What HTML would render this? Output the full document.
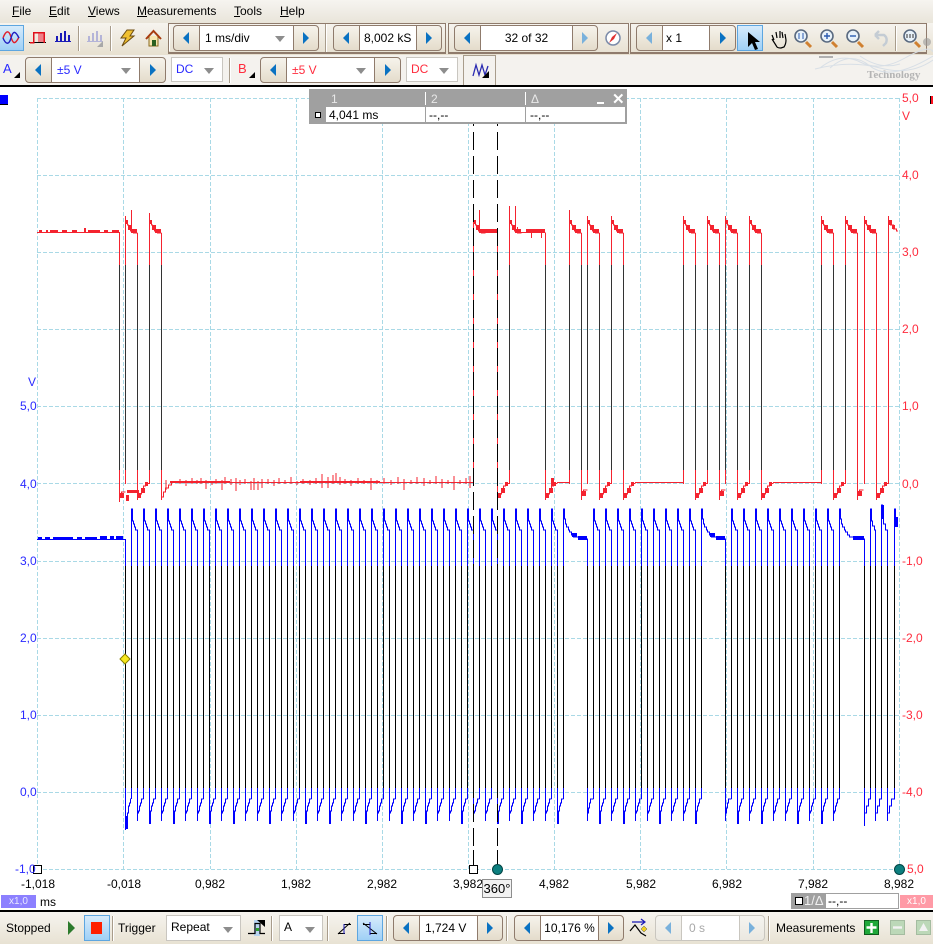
<!DOCTYPE html>
<html><head><meta charset="utf-8"><title>Scope</title>
<style>
html,body{margin:0;padding:0;width:933px;height:944px;overflow:hidden;background:#fff;font:12px "Liberation Sans",sans-serif;color:#000}
.a{position:absolute;white-space:nowrap;line-height:14px}
.band{position:absolute;left:0;width:933px}
.s{position:absolute;height:24px;border:1px solid #8f7b6c;border-radius:4px;background:linear-gradient(#f6f3ec,#e4dccb);box-sizing:content-box}
.s b{position:absolute;top:0;height:24px;background:#fff;border-left:1px solid #8f7b6c;border-right:1px solid #8f7b6c;font-weight:normal;line-height:24px;white-space:nowrap;box-sizing:border-box}
.s.off{border-color:#c9c6bf;background:linear-gradient(#f5f4f0,#ebe8e0)}
.s.off b{border-color:#c9c6bf}
.al,.ar{position:absolute;top:6px;width:0;height:0;border-top:6px solid transparent;border-bottom:6px solid transparent}
.al{left:9px;border-right:6px solid #0a72c2}
.ar{right:9px;border-left:6px solid #0a72c2}
.lt.al{border-right-color:#79b1dc}.lt.ar{border-left-color:#79b1dc}
.dd{position:absolute;width:0;height:0;border-left:5px solid transparent;border-right:5px solid transparent;border-top:6px solid #8d8d8d}
.box{position:absolute;background:#fff;border:1px solid #c9c6c0;box-sizing:border-box;line-height:23px;white-space:nowrap}
.sep{position:absolute;width:1px;background:#a89c8b;border-right:1px solid #fff}
.fr{position:absolute;border:1px solid #8f7b6c;box-sizing:border-box}
.sel{position:absolute;background:linear-gradient(#d6ebfb,#9fd0f6);border:1px solid #5da6e0;box-sizing:border-box}
.bl{color:#2a2aff}.rd{color:#ff2b3d}
u{text-decoration:underline}
</style></head><body>

<div class="band" style="top:0;height:23px;background:linear-gradient(#f6f4f0,#e9e5da)"></div>
<div class="band" style="top:23px;height:32px;background:linear-gradient(#f6f4ef,#e7e0d0)"></div>
<div class="band" style="top:55px;height:30px;background:#f4f2ee"></div>
<div class="band" style="top:85px;height:2px;background:#000"></div>
<div class="band" style="top:910px;height:2px;background:#000"></div>
<div class="band" style="top:912px;height:32px;background:linear-gradient(#f6f4ef,#e8e2d3)"></div>

<!-- Menu -->
<span class="a" style="left:12px;top:4px"><u>F</u>ile</span>
<span class="a" style="left:49px;top:4px"><u>E</u>dit</span>
<span class="a" style="left:88px;top:4px"><u>V</u>iews</span>
<span class="a" style="left:137px;top:4px"><u>M</u>easurements</span>
<span class="a" style="left:234px;top:4px"><u>T</u>ools</span>
<span class="a" style="left:280px;top:4px"><u>H</u>elp</span>

<!-- Row 1 -->
<div class="sel" style="left:-1px;top:25px;width:25px;height:26px"></div>
<div class="sep" style="left:78px;top:26px;height:25px"></div>
<div class="sep" style="left:110px;top:26px;height:25px"></div>
<div class="sep" style="left:168px;top:26px;height:25px"></div>
<div class="fr" style="left:168px;top:23px;width:278px;height:31px;border-bottom-width:2px"></div>
<div class="sep" style="left:325px;top:24px;height:28px"></div>
<div class="fr" style="left:448px;top:23px;width:181px;height:31px;border-bottom-width:2px"></div>
<div class="fr" style="left:630px;top:23px;width:297px;height:31px;border-bottom-width:2px"></div>
<div class="sep" style="left:895px;top:26px;height:25px"></div>

<div class="s" style="left:173px;top:25px;width:144px"><i class="al"></i><b style="left:25px;width:95px;padding-left:5px">1 ms/div</b><u class="dd" style="left:101px;top:10px"></u><i class="ar"></i></div>
<div class="s" style="left:333px;top:25px;width:107px"><i class="al"></i><b style="left:25px;width:58px;padding-left:4px">8,002 kS</b><i class="ar"></i></div>
<div class="s" style="left:454px;top:25px;width:142px;border-color:#8f7b6c"><i class="al"></i><b style="left:25px;width:93px;text-align:center">32 of 32</b><i class="ar lt"></i></div>
<div class="s" style="left:636px;top:25px;width:98px"><i class="al lt"></i><b style="left:25px;width:48px;padding-left:3px">x 1</b><i class="ar"></i></div>
<div class="sel" style="left:737px;top:25px;width:26px;height:26px"></div>

<!-- Row 2 -->
<span class="a bl" style="left:3px;top:62px;font-size:13px">A</span>
<div class="s" style="left:25px;top:57px;width:139px"><i class="al"></i><b class="bl" style="left:25px;width:89px;padding-left:5px">±5 V</b><u class="dd" style="left:95px;top:10px"></u><i class="ar"></i></div>
<div class="box bl" style="left:171px;top:57px;width:52px;height:25px;padding-left:4px">DC<u class="dd" style="left:32px;top:10px"></u></div>
<div class="sep" style="left:229px;top:58px;height:25px"></div>
<span class="a rd" style="left:238px;top:62px;font-size:13px">B</span>
<div class="s" style="left:260px;top:57px;width:139px"><i class="al"></i><b class="rd" style="left:25px;width:89px;padding-left:5px">±5 V</b><u class="dd" style="left:95px;top:10px"></u><i class="ar"></i></div>
<div class="box rd" style="left:406px;top:57px;width:52px;height:25px;padding-left:4px">DC<u class="dd" style="left:32px;top:10px"></u></div>
<div class="fr" style="left:463px;top:55px;width:33px;height:30px;border-bottom:0;border-color:#a89c8b"></div>
<span class="a" style="left:867px;top:69px;font:bold 11px 'Liberation Serif',serif;color:#b4b4b4">Technology</span>

<!-- Bottom toolbar -->
<span class="a" style="left:6px;top:921px">Stopped</span>
<div class="sel" style="left:84px;top:915px;width:26px;height:26px"></div>
<div class="sep" style="left:112px;top:916px;height:25px"></div>
<span class="a" style="left:118px;top:921px">Trigger</span>
<div class="box" style="left:166px;top:915px;width:75px;height:26px;padding-left:4px">Repeat<u class="dd" style="left:56px;top:11px"></u></div>
<div class="sep" style="left:271px;top:916px;height:25px"></div>
<div class="box" style="left:279px;top:915px;width:44px;height:26px;padding-left:4px">A<u class="dd" style="left:25px;top:11px"></u></div>
<div class="sep" style="left:327px;top:916px;height:25px"></div>
<div class="sel" style="left:357px;top:915px;width:26px;height:26px"></div>
<div class="sep" style="left:386px;top:916px;height:25px"></div>
<div class="s" style="left:393px;top:915px;width:108px"><i class="al"></i><b style="left:25px;width:59px;padding-left:5px">1,724 V</b><i class="ar"></i></div>
<div class="sep" style="left:506px;top:916px;height:25px"></div>
<div class="s" style="left:514px;top:915px;width:108px"><i class="al"></i><b style="left:25px;width:59px;text-align:center">10,176 %</b><i class="ar"></i></div>
<div class="s off" style="left:655px;top:915px;width:108px"><i class="al lt"></i><b style="left:25px;width:59px;padding-left:7px;color:#a8a8a8">0 s</b><i class="ar lt"></i></div>
<div class="sep" style="left:768px;top:916px;height:25px"></div>
<span class="a" style="left:776px;top:921px">Measurements</span>

<!-- Plot -->
<svg style="position:absolute;left:0;top:0" width="933" height="944" viewBox="0 0 933 944" shape-rendering="crispEdges">
<defs>
<g id="p"><path fill="none" stroke="#0000ff" d="M.5 799V509H1.5V521H2.5V524H3.5V527H4.5V530H6.5V821V813H7.5V811H8.5V806H9.5V803H10.5V799H12.5"/><path stroke="#000" d="M.5 566V788M6.5 566V788"/></g>
<g id="q"><path fill="none" stroke="#0000ff" d="M.5 799V509H1.5V521H2.5V524H3.5V527H4.5V530H6.5V824V813H7.5V824V811H8.5V806H9.5V803H10.5V799H12.5"/><path stroke="#000" d="M.5 566V788M6.5 566V788"/></g>
<g id="l"><path fill="none" stroke="#0000ff" d="M.5 799V509H1.5V519H2.5V524H3.5V527H5.5V530H6.5V532H8.5V535H10.5V537H15.5V539H24.5V821V813H25.5V808H26.5V803H27.5V799H30.5"/><rect x="9" y="533" width="5" height="4" fill="#0000ff"/><rect x="15" y="536" width="9" height="4" fill="#0000ff"/><path stroke="#000" d="M.5 566V788M24.5 566V788"/></g>
<g id="h"><path fill="none" stroke="#f4232f" d="M.5 484V216V221H2.5V225H3.5V228H5.5V231H8.5V233H12.5"/><rect x="1" y="220" width="2" height="4" fill="#f4232f"/><rect x="3" y="225" width="4" height="5" fill="#f4232f"/><rect x="6" y="229" width="6" height="4" fill="#f4232f"/></g>
<g id="d"><path fill="none" stroke="#f4232f" d="M.5 500V497H2.5V494H4.5V490H6.5V486H8.5V483.5H12.5"/><rect x="1" y="493" width="3" height="5" fill="#f4232f"/><rect x="4" y="488" width="4" height="5" fill="#f4232f"/><rect x="8" y="482" width="3" height="4" fill="#f4232f"/></g>
<g id="e"><path fill="none" stroke="#f4232f" d="M.5 500V494H2.5V490H6.5"/><rect x="1" y="491" width="4" height="5" fill="#f4232f"/></g>
</defs>

<path fill="none" stroke="#a9d9e6" stroke-dasharray="4 2" d="M37.5 98V869M123.5 98V869M210.5 98V869M296.5 98V869M382.5 98V869M468.5 98V869M554.5 98V869M640.5 98V869M726.5 98V869M813.5 98V869M899.5 98V869M37 98.5H899M37 175.5H899M37 252.5H899M37 329.5H899M37 406.5H899M37 483.5H899M37 561.5H899M37 638.5H899M37 715.5H899M37 792.5H899M37 869.5H899"/>

<!-- Red trace -->
<path fill="none" stroke="#f4232f" d="M37 232.5H119.5V502M137.5 233V500M161.5 233V500M497.5 233V500M545.5 233V500M581.5 233V500M599.5 233V500M623.5 233V500M695.5 233V500M719.5 233V500M737.5 233V500M761.5 233V500M833.5 233V500M857.5 233V500M876.5 233V500"/>
<path fill="#f4232f" d="M39 230h3v2h-3zM46 230h2v2h-2zM50 230h8v2h-8zM62 230h5v2h-5zM72 230h5v2h-5zM84 228h2v4h-2zM88 230h12v2h-12zM104 230h4v2h-4zM112 230h7v2h-7z"/>
<use href="#e" x="119" y="2"/>
<use href="#h" x="125"/><use href="#d" x="137"/><use href="#h" x="149"/>
<path stroke="#f4232f" d="M131.5 210V226"/>
<use href="#h" x="473"/><path fill="none" stroke="#f4232f" d="M485 232.5H497.5"/><rect x="481" y="229" width="16" height="4" fill="#f4232f"/><path stroke="#f4232f" d="M479.5 210V226"/>
<use href="#d" x="497"/>
<use href="#h" x="509"/><path fill="none" stroke="#f4232f" d="M521 232.5H545.5"/><rect x="526" y="229" width="19" height="4" fill="#f4232f"/><path stroke="#f4232f" d="M515.5 206V228M517.5 227V233M531.5 230V238M541.5 230V238"/>
<use href="#d" x="545"/><path fill="none" stroke="#f4232f" d="M557 482.5H569"/>
<use href="#h" x="569"/><use href="#e" x="581"/><use href="#h" x="587"/><use href="#d" x="599"/><use href="#h" x="611"/><use href="#d" x="623"/>
<path fill="none" stroke="#f4232f" d="M635 482.5H683"/>
<use href="#h" x="683"/><use href="#d" x="695"/><use href="#h" x="707"/><use href="#e" x="719"/><use href="#h" x="725"/><use href="#d" x="737"/><use href="#h" x="749"/><use href="#d" x="761"/>
<path fill="none" stroke="#f4232f" d="M773 482.5H821"/>
<use href="#h" x="821"/><use href="#d" x="833"/><use href="#h" x="845"/><use href="#e" x="857"/><use href="#h" x="864"/><use href="#d" x="876"/><path fill="none" stroke="#f4232f" d="M888.5 484V216V221H890.5V225H893.5V229H896.5V231H898"/><rect x="889" y="220" width="3" height="5" fill="#f4232f"/><rect x="892" y="225" width="3" height="4" fill="#f4232f"/>
<path fill="none" stroke="#f4232f" d="M161.5 500V497H163.5V492H165.5V488H168.5V485H171.5V482.5H473M166 480V490M180 479V484M186 480V486M192 478V484M197 480V484M201 478V484M206 480V489M212 481V485M216 479V484M222 480V490M225 477V484M231 479V485M236 478V491M240 480V485M245 479V484M251 481V490M254 478V490M258 481V490M262 479V488M268 479V484M274 480V486M279 478V484M285 480V484M291 477V484M297 481V485M303 479V484M310 480V485M316 478V484M322 474V488M328 477V488M333 475V484M336 473V482M340 477V485M345 479V484M351 480V486M358 478V484M364 480V484M371 478V490M377 480V484M384 478V484M391 480V485M398 477V484M404 479V490M411 480V484M417 477V484M424 478V486M430 480V484M436 476V484M442 479V488M448 480V484M454 476V490M460 480V484M466 478V484M470 476V488"/>
<rect x="170" y="481" width="60" height="2" fill="#f4232f"/><rect x="300" y="481" width="80" height="2" fill="#f4232f"/>
<path fill="#f4232f" d="M127 490h12v3h-12zM126 495h3v6h-3zM551 478h3v8h-3z"/>
<path stroke="#f4232f" d="M473.5 216V484M509.5 206V484M569.5 210V484M587.5 216V484M611.5 216V484M683.5 216V484M707.5 216V484M725.5 216V484M749.5 216V484M821.5 216V484M845.5 216V484M864.5 216V484M888.5 216V484M125.5 220V484M149.5 213V484"/>
<path stroke="#333" d="M119.5 265V470M125.5 265V470M137.5 265V470M149.5 265V470M161.5 265V470M509.5 265V470M545.5 265V470M569.5 265V470M581.5 265V470M587.5 265V470M599.5 265V470M611.5 265V470M623.5 265V470M683.5 265V470M695.5 265V470M707.5 265V470M719.5 265V470M725.5 265V470M737.5 265V470M749.5 265V470M761.5 265V470M821.5 265V470M833.5 265V470M845.5 265V470"/>

<!-- Blue trace -->
<path fill="none" stroke="#0000ff" d="M37 539.5H125.5V830V818H127.5V813H128.5V806H129.5V803H130.5V799H131"/>
<path fill="#0000ff" d="M38 537h4v2h-4zM45 537h5v2h-5zM53 537h20v2h-20zM77 537h5v2h-5zM85 537h12v2h-12zM100 536h7v3h-7zM110 536h4v3h-4zM116 536h7v3h-7zM125 816h3v13h-3z"/>
<path stroke="#000" d="M125.5 566V788"/>
<use href="#p" x="131"/><use href="#q" x="143"/><use href="#p" x="155"/><use href="#q" x="167"/><use href="#p" x="179"/><use href="#p" x="191"/><use href="#q" x="203"/><use href="#p" x="215"/><use href="#q" x="227"/><use href="#p" x="239"/><use href="#p" x="251"/><use href="#q" x="263"/><use href="#p" x="275"/><use href="#p" x="287"/><use href="#q" x="299"/><use href="#p" x="311"/><use href="#q" x="323"/><use href="#p" x="335"/><use href="#p" x="347"/><use href="#q" x="359"/><use href="#p" x="371"/><use href="#p" x="383"/><use href="#q" x="395"/><use href="#p" x="407"/><use href="#q" x="419"/><use href="#p" x="431"/><use href="#p" x="443"/><use href="#q" x="455"/><use href="#p" x="467"/><use href="#p" x="479"/><use href="#q" x="491"/><use href="#p" x="503"/><use href="#q" x="515"/><use href="#p" x="527"/><use href="#p" x="539"/><use href="#q" x="551"/>
<use href="#l" x="563"/>
<use href="#q" x="593"/><use href="#p" x="605"/><use href="#q" x="617"/><use href="#p" x="629"/><use href="#p" x="641"/><use href="#q" x="653"/><use href="#p" x="665"/><use href="#p" x="677"/><use href="#q" x="689"/>
<use href="#l" x="701"/>
<use href="#q" x="731"/><use href="#p" x="743"/><use href="#q" x="755"/><use href="#p" x="767"/><use href="#p" x="779"/><use href="#q" x="791"/><use href="#p" x="803"/><use href="#q" x="815"/><use href="#p" x="827"/>
<path fill="none" stroke="#0000ff" d="M839.5 799V509H840.5V519H841.5V524H842.5V527H844.5V530H845.5V532H847.5V535H849.5V537H854.5V539H864.5V826V813H866.5V806H868.5V799H870.5V509H871.5V521H872.5V526H874.5V530H875.5V821V813H877.5V806H879.5V799H881.5V505H882.5V518H883.5V524H885.5V530H887.5V821V813H889.5V806H891.5V799H894.5V509H895.5V521H896.5V526H897.5"/>
<rect x="853" y="536" width="11" height="4" fill="#0000ff"/><rect x="881" y="505" width="3" height="14" fill="#0000ff"/><rect x="895" y="517" width="3" height="10" fill="#0000ff"/>
<path stroke="#000" d="M839.5 566V788M864.5 566V788M870.5 566V788M875.5 566V788M881.5 566V788M887.5 566V788M894.5 566V788"/>

<!-- Cursors -->
<path fill="none" stroke="#000" stroke-dasharray="18 6" d="M473.5 108V864M497.5 108V864"/>
<path stroke="#000" d="M473.5 850V865M497.5 850V865"/>
<g shape-rendering="auto">
<polygon points="125,654 130,659 125,664 120,659" fill="#f7e81c" stroke="#8a8000"/>
<circle cx="497.5" cy="869.5" r="5" fill="#0c7f7f" stroke="#044"/>
<circle cx="899.5" cy="869.5" r="5" fill="#0c7f7f" stroke="#044"/>
</g>
<rect x="33.5" y="865.5" width="8" height="8" fill="#fff" stroke="#000"/>
<rect x="469.5" y="865.5" width="8" height="8" fill="#fff" stroke="#000"/>
<rect x="0" y="95" width="8" height="9" fill="#0000ff"/><path stroke="#000" d="M0 104.5H8"/>
<rect x="930" y="96" width="3" height="8" fill="#ff1020"/><rect x="930" y="96" width="1" height="8" fill="#000"/>
</svg>

<!-- Y labels -->
<span class="a bl" style="left:28px;top:375px">V</span>
<span class="a bl" style="left:20px;top:399px">5,0</span>
<span class="a bl" style="left:20px;top:477px">4,0</span>
<span class="a bl" style="left:20px;top:554px">3,0</span>
<span class="a bl" style="left:20px;top:631px">2,0</span>
<span class="a bl" style="left:20px;top:708px">1,0</span>
<span class="a bl" style="left:20px;top:785px">0,0</span>
<span class="a bl" style="left:15px;top:862px">-1,0</span>
<span class="a rd" style="left:902px;top:91px">5,0</span>
<span class="a rd" style="left:902px;top:109px">V</span>
<span class="a rd" style="left:902px;top:168px">4,0</span>
<span class="a rd" style="left:902px;top:245px">3,0</span>
<span class="a rd" style="left:902px;top:322px">2,0</span>
<span class="a rd" style="left:902px;top:399px">1,0</span>
<span class="a rd" style="left:902px;top:477px">0,0</span>
<span class="a rd" style="left:902px;top:554px">-1,0</span>
<span class="a rd" style="left:902px;top:631px">-2,0</span>
<span class="a rd" style="left:902px;top:708px">-3,0</span>
<span class="a rd" style="left:902px;top:785px">-4,0</span>
<span class="a rd" style="left:907px;top:862px">5,0</span>

<!-- X labels -->
<span class="a" style="left:21px;top:877px">-1,018</span>
<span class="a" style="left:107px;top:877px">-0,018</span>
<span class="a" style="left:195px;top:877px">0,982</span>
<span class="a" style="left:281px;top:877px">1,982</span>
<span class="a" style="left:367px;top:877px">2,982</span>
<span class="a" style="left:453px;top:877px">3,982</span>
<span class="a" style="left:539px;top:877px">4,982</span>
<span class="a" style="left:626px;top:877px">5,982</span>
<span class="a" style="left:712px;top:877px">6,982</span>
<span class="a" style="left:798px;top:877px">7,982</span>
<span class="a" style="left:884px;top:877px">8,982</span>

<div class="a" style="left:482px;top:879px;width:30px;height:19px;background:#f2f2f2;border:1px solid #8d8d8d;box-sizing:border-box;line-height:18px;text-align:center;font-size:13px">360°</div>

<div class="a" style="left:1px;top:895px;width:35px;height:13px;background:#8c80ff;color:#e8e8ff;font-size:10px;line-height:13px;text-align:center">x1,0</div>
<span class="a" style="left:40px;top:895px">ms</span>
<div class="a" style="left:791px;top:893px;width:108px;height:16px;background:#a0a0a0;box-sizing:border-box"></div>
<div class="a" style="left:826px;top:894px;width:72px;height:14px;background:#fff;line-height:14px;padding-left:2px;box-sizing:border-box">--,--</div>
<span class="a" style="left:804px;top:894px;color:#f0f0f0;font-size:13px">1/Δ</span>
<div class="a" style="left:795px;top:897px;width:6px;height:6px;background:#fff;border:1px solid #000"></div>
<div class="a" style="left:900px;top:895px;width:33px;height:13px;background:#ff9aa6;color:#fff;font-size:10px;line-height:13px;text-align:center">x1,0</div>

<!-- Popup -->
<div style="position:absolute;left:309px;top:89px;width:318px;height:35px;background:#a0a0a0">
 <div style="position:absolute;left:17px;top:18px;width:299px;height:15px;background:#fff"></div>
 <div style="position:absolute;left:116px;top:3px;width:1px;height:13px;background:#fff"></div>
 <div style="position:absolute;left:116px;top:18px;width:1px;height:15px;background:#a0a0a0"></div>
 <div style="position:absolute;left:216px;top:3px;width:1px;height:13px;background:#fff"></div>
 <div style="position:absolute;left:216px;top:18px;width:1px;height:15px;background:#a0a0a0"></div>
 <span class="a" style="left:22px;top:3px;color:#e8e8e8">1</span>
 <span class="a" style="left:122px;top:3px;color:#e8e8e8">2</span>
 <span class="a" style="left:222px;top:3px;color:#e8e8e8">Δ</span>
 <div style="position:absolute;left:288px;top:13px;width:7px;height:2px;background:#fff"></div>
 <span class="a" style="left:303px;top:1px;color:#fff;font:bold 15px 'Liberation Sans',sans-serif">✕</span>
 <div style="position:absolute;left:6px;top:23px;width:4px;height:4px;background:#fff;border:1px solid #000"></div>
 <span class="a" style="left:20px;top:19px">4,041 ms</span>
 <span class="a" style="left:120px;top:19px">--,--</span>
 <span class="a" style="left:221px;top:19px">--,--</span>
</div>

<!-- Icons -->
<svg style="position:absolute;left:0;top:0" width="933" height="944" viewBox="0 0 933 944">
<path fill="none" stroke="#e0202c" stroke-width="1.4" d="M3 38C6 30 9 30 11 37S15 45 19 37"/>
<path fill="none" stroke="#2020c0" stroke-width="1.4" d="M3 38C6 45 9 45 11 38S15 30 19 38"/>
<g shape-rendering="crispEdges">
<rect x="38" y="33" width="7" height="10" fill="#f08088"/>
<path stroke="#000" d="M29 42.500H46"/>
<path fill="none" stroke="#e0101c" stroke-width="1.500" d="M30 42.500H33.500V32.500H44V43"/>
<path stroke="#1a1ab8" stroke-width="2" d="M57 41V36M61 41V33M65 41V31M69 41V35"/><path stroke="#1a1ab8" d="M55 41.500H71"/>
<path stroke="#b4b4d8" stroke-width="2" d="M89 41V36M93 41V33M97 41V31M101 41V35"/><path stroke="#b4b4d8" d="M87 41.500H103"/>
</g>
<polygon points="97,47 103,47 103,41" fill="#a8a8a8"/>
<polygon points="127,30 134,30 130,36 134,36 122,46 126,38 121,38" fill="#f0c030" stroke="#6c4c10"/>
<path d="M149 36V46H158V36" fill="#f7e6b0" stroke="#8a6a20"/><path d="M146 39L153.500 31L161 39" fill="none" stroke="#a83c10" stroke-width="2"/><rect x="152" y="40" width="4" height="6" fill="#2a6020"/>
<circle cx="613" cy="38" r="7" fill="#fff" stroke="#7a8aa8" stroke-width="1.500"/><path d="M617 33L614 39L609 43L612 37Z" fill="#e03030"/>
<g fill="none">
<path d="M748 32L748 47L752 43L755 50L758 49L755 42L760 42Z" fill="#000"/>
<path d="M773 39L778 47Q779 48 782 48L785 47Q787 44 787 40L786 34M784 38L783 32M781 38V31M778 38L777 32M775 40L773 35" stroke="#000" stroke-width="1.200" transform="translate(-1,0)"/>
</g>
<g fill="none">
<path d="M806 42L811 47" stroke="#d08030" stroke-width="3"/><circle cx="801" cy="36" r="6" fill="#e8f2fa" stroke="#5a6a80" stroke-width="1.600"/><path d="M799 33V39M803 33V39" stroke="#2a5ab0"/>
<path d="M832 42L837 47" stroke="#d08030" stroke-width="3"/><circle cx="827" cy="36" r="6" fill="#e8f2fa" stroke="#5a6a80" stroke-width="1.600"/><path d="M824 36H830M827 33V39" stroke="#2a5ab0" stroke-width="1.400"/>
<path d="M858 42L863 47" stroke="#d08030" stroke-width="3"/><circle cx="853" cy="36" r="6" fill="#e8f2fa" stroke="#5a6a80" stroke-width="1.600"/><path d="M850 36H856" stroke="#2a5ab0" stroke-width="1.400"/>
<path d="M875 35H884Q888 38 886 43L883 46M875 35L879 31M875 35L879 39" stroke="#c4ccd4" stroke-width="2.400"/>
<path d="M915 42L920 47" stroke="#d08030" stroke-width="3"/><circle cx="910" cy="36" r="6" fill="#e8f2fa" stroke="#5a6a80" stroke-width="1.600"/><path d="M907 34V38M910 34V38M913 34V38" stroke="#333"/>
<path d="M820 68Q840 52 860 62T905 58T933 52M830 68Q850 50 870 66T933 56M815 69Q850 60 880 68T933 60M860 56Q880 70 900 64" stroke="#d8dfe6"/>
</g>
<rect x="819" y="56" width="14" height="2" fill="#b0b0b0"/>
<circle cx="927" cy="42" r="4" fill="#999" opacity=".6"/>
<path d="M473 76L476 65L479 75L482 65L485 75L488 66" fill="none" stroke="#2a2ab0" stroke-width="1.300"/><polygon points="482,78 489,78 489,71" fill="#000"/>
<polygon points="14,78 20,78 20,72" fill="#000"/><polygon points="249,78 255,78 255,72" fill="#000"/>
<polygon points="68,921 75,928 68,935" fill="#2c7a2c"/>
<rect x="91" y="922" width="11" height="12" fill="#ff2000"/>
<rect x="254" y="920" width="6" height="16" fill="#b8d4f0"/><path d="M248 933.500H255V923.500H260V933.500H265" fill="none" stroke="#000" stroke-width="1.200"/><polygon points="257,920 265,920 265,927" fill="#000"/><rect x="256" y="928" width="3" height="3" fill="#2ca02c"/>
<path d="M338 934L350 923M338 933.500H345M344 924.500H351" stroke="#000" fill="none"/><path d="M344 924V934" stroke="#1a1ab8"/>
<path d="M363 923L377 934M363 924.500H370M370 933.500H377" stroke="#000" fill="none"/><path d="M370 922V935" stroke="#1a1ab8"/>
<path d="M630 931L635 925L641 933L646 936" fill="none" stroke="#000" stroke-width="1.200"/><path d="M632 922H644M641 919L645 922L641 925" fill="none" stroke="#1a1ab8" stroke-width="1.200"/><polygon points="644,926 647,929 644,932 641,929" fill="#f0d020" stroke="#555" stroke-width=".5"/>
<rect x="864.500" y="920.500" width="14" height="14" fill="#1fa83a" stroke="#0c5a1c"/><path d="M871.500 923V933M866.500 927.500H876.500" stroke="#fff" stroke-width="2.400"/>
<rect x="890.500" y="920.500" width="14" height="14" fill="#bcd8b8" stroke="#a4bca0"/><path d="M893 927.500H902" stroke="#f2f2f2" stroke-width="2.400"/>
<rect x="916.500" y="920.500" width="14" height="14" fill="#bcd8b8" stroke="#a4bca0"/><polygon points="923.500,923 928,931 919,931" fill="#f2f2f2"/>
</svg>
</body></html>
